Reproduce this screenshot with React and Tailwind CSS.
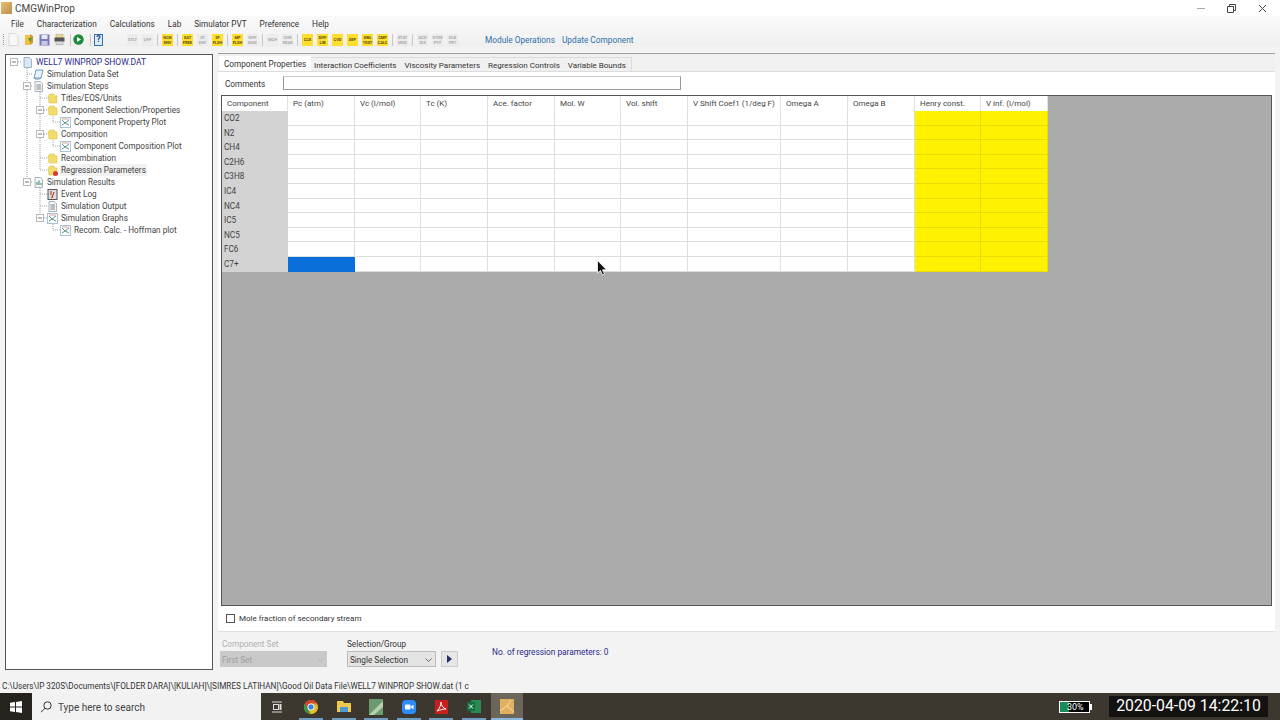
import React from "react";

const menus = ["File", "Characterization", "Calculations", "Lab", "Simulator PVT", "Preference", "Help"];

const tools = [
  ["STLT", "", "g"], ["LHP", "", "g"], "sep", ["NCN", "ENV", "y"], "sep", ["SAT", "FREE", "y"], ["2F", "ENV", "g"], ["2F", "FLSH", "y"], "sep",
  ["MP", "FLSH", "y"], ["KIFF", "MAX", "g"], "sep", ["MCH", "", "g"], ["CHR", "SEAR", "g"], "sep", ["CCE", "", "y"], ["DIFF", "LIB", "y"],
  ["CVD", "", "y"], ["SEP", "", "y"], ["SWL", "TEST", "y"], ["CMP", "CALC", "y"], "sep", ["STAT", "MOD", "g"], "sep", ["GCH", "DIS", "g"], ["STRS", "PVT", "g"], ["DLB", "PRT", "g"],
];

const columns = [
  { name: "Component", w: "w-[66px]" },
  { name: "Pc (atm)", w: "w-[67px]" },
  { name: "Vc (l/mol)", w: "w-[66px]" },
  { name: "Tc (K)", w: "w-[67px]" },
  { name: "Ace. factor", w: "w-[67px]" },
  { name: "Mol. W", w: "w-[66px]" },
  { name: "Vol. shift", w: "w-[67px]" },
  { name: "V Shift Coef1 (1/deg F)", w: "w-[93px]" },
  { name: "Omega A", w: "w-[67px]" },
  { name: "Omega B", w: "w-[67px]" },
  { name: "Henry const.", w: "w-[66px]" },
  { name: "V inf. (l/mol)", w: "w-[67px]" },
];

const comps = ["CO2", "N2", "CH4", "C2H6", "C3H8", "IC4", "NC4", "IC5", "NC5", "FC6", "C7+"];

const treeItems = [
  { level: 0, text: "WELL7 WINPROP SHOW.DAT", icon: "doc", root: true },
  { level: 1, text: "Simulation Data Set", icon: "scroll" },
  { level: 1, text: "Simulation Steps", icon: "list" },
  { level: 2, text: "Titles/EOS/Units", icon: "folder" },
  { level: 2, text: "Component Selection/Properties", icon: "folder" },
  { level: 3, text: "Component Property Plot", icon: "chart" },
  { level: 2, text: "Composition", icon: "folder" },
  { level: 3, text: "Component Composition Plot", icon: "chart" },
  { level: 2, text: "Recombination", icon: "folder" },
  { level: 2, text: "Regression Parameters", icon: "folderx", active: true },
  { level: 1, text: "Simulation Results", icon: "results" },
  { level: 2, text: "Event Log", icon: "log" },
  { level: 2, text: "Simulation Output", icon: "list" },
  { level: 2, text: "Simulation Graphs", icon: "chart" },
  { level: 3, text: "Recom. Calc. - Hoffman plot", icon: "chart" },
];

const levelPad = ["pl-[16px]", "pl-[27px]", "pl-[41px]", "pl-[54px]"];

const TreeIcon = ({ type }) => {
  if (type === "folder" || type === "folderx") {
    return (
      <svg width="11" height="11" viewBox="0 0 11 11" className="shrink-0">
        <path d="M1 3 L3 1 H7 L8 3 H10 V10 H2 Z" fill="#f2dc6a" stroke="#dcc350" strokeWidth="0.6" />
        {type === "folderx" && <circle cx="8.5" cy="8.5" r="2.5" fill="#d83a3a" />}
      </svg>
    );
  }
  if (type === "chart") {
    return (
      <svg width="11" height="11" viewBox="0 0 11 11" className="shrink-0">
        <rect x="0.5" y="0.5" width="10" height="10" fill="#fff" stroke="#a8c6d8" />
        <path d="M2 3 L5 6 L9 8 M2 8 L5 6 L9 3" fill="none" stroke="#3a7a6a" strokeWidth="0.8" />
        <path d="M2 2 H9" stroke="#d06060" strokeWidth="0.6" />
      </svg>
    );
  }
  if (type === "log") {
    return (
      <svg width="11" height="11" viewBox="0 0 11 11" className="shrink-0">
        <rect x="1" y="0.5" width="9" height="10" fill="#ddd" stroke="#555" />
        <path d="M4 2 V6 M7 3 L5 9 M4 8 H4.8" stroke="#b02a2a" strokeWidth="1" />
      </svg>
    );
  }
  if (type === "scroll") {
    return (
      <svg width="11" height="11" viewBox="0 0 11 11" className="shrink-0">
        <path d="M3 1 H10 L8 9 H1 Z" fill="#e8f2f8" stroke="#4a86a8" strokeWidth="0.8" />
        <path d="M1 9 C1 10.5 7 10.5 8 9" fill="none" stroke="#4a86a8" strokeWidth="0.8" />
      </svg>
    );
  }
  return (
    <svg width="11" height="11" viewBox="0 0 11 11" className="shrink-0">
      <path d="M2 0.5 H7.5 L9.5 2.5 V10.5 H2 Z" fill={type === "doc" ? "#d8e6f6" : "#f4f4f4"} stroke="#7f9ab0" strokeWidth="0.7" />
      {type === "list" && <path d="M3.5 4 H8 M3.5 6 H8 M3.5 8 H8" stroke="#555" strokeWidth="0.7" />}
      {type === "results" && <path d="M4 8 V5 M6 8 V3.5 M8 8 V6" stroke="#2f8a6a" strokeWidth="1" />}
    </svg>
  );
};

const TreeLines = () => {
  const y = (i) => 7 + 12 * i;
  const boxes = [
    [8, 0],
    [21, 2],
    [34, 4],
    [34, 6],
    [21, 10],
    [34, 13],
  ];
  return (
    <svg width="100" height="190" className="absolute left-0 top-0">
      <g stroke="#a0a0a0" strokeWidth="1" strokeDasharray="1 1" fill="none">
        <path d={`M8 ${y(0)} H16 M21 ${y(0)} V${y(10)} M21 ${y(1)} H27 M21 ${y(2)} H27 M21 ${y(10)} H27`} />
        <path d={`M34 ${y(2)} V${y(9)} M34 ${y(3)} H41 M34 ${y(4)} H41 M34 ${y(6)} H41 M34 ${y(8)} H41 M34 ${y(9)} H41`} />
        <path d={`M34 ${y(10)} V${y(13)} M34 ${y(11)} H41 M34 ${y(12)} H41 M34 ${y(13)} H41`} />
        <path d={`M47 ${y(4)} V${y(5)} H54 M47 ${y(6)} V${y(7)} H54 M47 ${y(13)} V${y(14)} H54`} />
      </g>
      {boxes.map(([x, i]) => (
        <g key={`${x}-${i}`}>
          <rect x={x - 3.5} y={y(i) - 3.5} width="7" height="7" fill="#fff" stroke="#b8b8b8" />
          <path d={`M${x - 2} ${y(i)} H${x + 2}`} stroke="#777" />
        </g>
      ))}
    </svg>
  );
};

const MiniTool = ({ a, b, kind }) => (
  <div
    className={`flex h-[12px] w-[11px] shrink-0 flex-col items-center justify-center overflow-hidden text-[4px] font-bold leading-[5px] ${
      kind === "y" ? "bg-[#ffdf2e] text-[#5a4a10]" : "bg-[#ececec] text-[#a8a8a8]"
    }`}
  >
    <span>{a}</span>
    {b && <span>{b}</span>}
  </div>
);

const Sep = () => <div className="h-[12px] w-px shrink-0 bg-[#c8c8c8]" />;

const Toolbar = () => (
  <div className="flex h-[15px] items-center pl-[3px]">
    <div className="h-[11px] w-px border-l border-dotted border-[#999]" />
    <svg width="11" height="13" viewBox="0 0 11 13" className="ml-[4px]">
      <path d="M1 0.5 H7 L10 3.5 V12.5 H1 Z" fill="#f7f7f7" stroke="#d8d8d8" />
    </svg>
    <svg width="10" height="13" viewBox="0 0 10 13" className="ml-[5px]">
      <path d="M1 2 H6 V12 H1 Z" fill="#f0c040" />
      <path d="M6 1 L9 3 V10 L6 12 Z" fill="#c89a30" />
      <path d="M4 5 L8 5 L6 9 Z" fill="#4a9a3a" />
    </svg>
    <svg width="11" height="12" viewBox="0 0 11 12" className="ml-[5px]">
      <rect x="0.5" y="0.5" width="10" height="11" fill="#8078c0" />
      <rect x="2.5" y="1" width="6" height="4" fill="#e8e8f4" />
      <rect x="2.5" y="7" width="6" height="4" fill="#c8c8e0" />
    </svg>
    <svg width="11" height="11" viewBox="0 0 11 11" className="ml-[4px]">
      <rect x="2" y="0.5" width="7" height="3" fill="#e8d890" stroke="#b0a060" strokeWidth="0.5" />
      <rect x="0.5" y="3.5" width="10" height="4" fill="#555" />
      <rect x="2" y="7.5" width="7" height="3" fill="#ddd" stroke="#888" strokeWidth="0.5" />
    </svg>
    <div className="ml-[5px] h-[12px] w-px bg-[#c8c8c8]" />
    <svg width="11" height="11" viewBox="0 0 11 11" className="ml-[2px]">
      <circle cx="5.5" cy="5.5" r="5.2" fill="#1f8a3a" />
      <path d="M4 3 L8 5.5 L4 8 Z" fill="#fff" />
    </svg>
    <div className="ml-[6px] h-[12px] w-px bg-[#c8c8c8]" />
    <div className="ml-[3px] flex h-[12px] w-[9px] items-center justify-center border border-[#3a6ea8] bg-[#dceaf8] text-[9px] font-bold leading-none text-[#1f4f9a]">
      ?
    </div>
    <div className="ml-[24px] flex items-center gap-[4px]">
      {tools.map((t, i) =>
        t === "sep" ? <Sep key={i} /> : <MiniTool key={i} a={t[0]} b={t[1]} kind={t[2]} />
      )}
    </div>
    <span className="ml-[27px] pt-[2px] text-[8.3px] text-[#2f6fa8]">Module Operations</span>
    <span className="ml-[7px] pt-[2px] text-[8.3px] text-[#2f6fa8]">Update Component</span>
  </div>
);

const Grid = () => (
  <div className="mx-[3px] mt-[5px] h-[511px] border border-[#555] bg-[#ababab]">
    <div className="flex h-[15px] w-[826px] bg-white">
      {columns.map((c) => (
        <div key={c.name} className={`${c.w} whitespace-nowrap border-r border-[#e0e0e0] pl-[5px] text-[8px] leading-[16px] text-[#444]`}>
          {c.name}
        </div>
      ))}
    </div>
    {comps.map((comp, r) => (
      <div key={comp} className="flex h-[14.6px] w-[826px]">
        {columns.map((c, i) => {
          let bg = "bg-white border-[#dedede]";
          if (i === 0) bg = "bg-[#d3d3d3] border-[#d3d3d3]";
          if (i >= 10) bg = "bg-[#fff200] border-[#e8dc00]";
          if (i === 1 && r === 10) bg = "bg-[#0a6fd8] border-[#0a6fd8]";
          return (
            <div key={c.name} className={`${c.w} ${bg} border-b border-r pl-[2px] text-[8.2px] leading-[14px] text-[#444]`}>
              {i === 0 ? comp : ""}
            </div>
          );
        })}
      </div>
    ))}
  </div>
);

const Chevron = ({ color }) => (
  <svg width="7" height="5" viewBox="0 0 7 5">
    <path d="M0.5 0.5 L3.5 3.5 L6.5 0.5" fill="none" stroke={color} />
  </svg>
);

const TaskIcon = ({ children, active }) => (
  <div className={`relative flex h-[27px] w-[32.6px] items-center justify-center ${active ? "bg-[#6b655a]" : ""}`}>
    {children}
    <div className={`absolute bottom-0 h-[2px] ${active ? "left-0 w-[32px] bg-[#8ab8dc]" : "left-[4px] w-[24px] bg-[#6f9cc0]"}`} />
  </div>
);

const Taskbar = () => (
  <div className="flex h-[27px] items-center bg-[#3c372f]">
    <div className="flex h-[27px] w-[32px] items-center justify-center bg-[#26231e]">
      <svg width="12" height="12" viewBox="0 0 12 12">
        <path d="M0 1.8 L5 1 V5.6 H0 Z M6 0.9 L12 0 V5.6 H6 Z M0 6.4 H5 V11 L0 10.2 Z M6 6.4 H12 V12 L6 11.1 Z" fill="#fff" />
      </svg>
    </div>
    <div className="flex h-[27px] w-[229px] items-center bg-[#f2f2f2] pl-[8px]">
      <svg width="12" height="12" viewBox="0 0 12 12">
        <circle cx="7.5" cy="4.5" r="3.7" fill="none" stroke="#333" />
        <path d="M5 7.2 L1 11.2" stroke="#333" />
      </svg>
      <span className="ml-[6px] pt-[2px] text-[10px] text-[#444]">Type here to search</span>
    </div>
    <div className="flex w-[32px] justify-center">
      <svg width="12" height="12" viewBox="0 0 12 12">
        <path d="M1 1 H11 M1 11 H11" stroke="#ddd" />
        <rect x="2.5" y="3.5" width="5" height="5" fill="none" stroke="#ddd" />
        <path d="M9.5 3 V9" stroke="#ddd" strokeWidth="2" />
      </svg>
    </div>
    <div className="ml-[2px] flex">
      <TaskIcon>
        <svg width="14" height="14" viewBox="0 0 14 14">
          <circle cx="7" cy="7" r="7" fill="#e0b020" />
          <path d="M7 0 A7 7 0 0 1 13 3.5 L7 3.5 L3 9 L1 3.5 A7 7 0 0 1 7 0" fill="#d8402c" />
          <path d="M13.4 5 A7 7 0 0 1 6 14 L9 9 Z" fill="#e8c020" />
          <path d="M1 3.5 L4 9.5 L6.5 14 A7 7 0 0 1 1 3.5" fill="#2f9a4a" />
          <circle cx="7" cy="7" r="3.2" fill="#3a80e0" stroke="#fff" />
        </svg>
      </TaskIcon>
      <TaskIcon>
        <svg width="14" height="13" viewBox="0 0 14 13">
          <path d="M0 1 H6 L7 3 H14 V12 H0 Z" fill="#f2c84a" />
          <rect x="3" y="7" width="8" height="5" fill="#4a9ad8" />
        </svg>
      </TaskIcon>
      <TaskIcon>
        <svg width="14" height="16" viewBox="0 0 14 16">
          <rect width="14" height="16" fill="#6a9a70" />
          <path d="M0 16 L14 2 V8 L5 16 Z" fill="#b8d0a8" />
        </svg>
      </TaskIcon>
      <TaskIcon>
        <svg width="14" height="14" viewBox="0 0 14 14">
          <rect width="14" height="14" rx="4" fill="#2d8cff" />
          <rect x="3" y="4.5" width="5.5" height="5" rx="1" fill="#fff" />
          <path d="M9 6.5 L11.5 4.8 V9.2 L9 7.5 Z" fill="#fff" />
        </svg>
      </TaskIcon>
      <TaskIcon>
        <svg width="13" height="14" viewBox="0 0 13 14">
          <rect width="13" height="14" fill="#c81e1e" />
          <path d="M2 11 C5 8 6 5 6 2 C6.5 6 8 8 11 9 C8 9 5 10 2 11" fill="none" stroke="#fff" />
        </svg>
      </TaskIcon>
      <TaskIcon>
        <svg width="14" height="13" viewBox="0 0 14 13">
          <rect x="4" width="10" height="13" fill="#2a8a50" />
          <rect y="2" width="8" height="9" fill="#107040" />
          <path d="M2 4.5 L6 8.5 M6 4.5 L2 8.5" stroke="#fff" />
        </svg>
      </TaskIcon>
      <TaskIcon active>
        <svg width="14" height="15" viewBox="0 0 14 15">
          <rect width="14" height="15" fill="#e0b060" />
          <path d="M0 12 L7 7 L14 13 M7 7 L11 1" stroke="#f4dcae" fill="none" />
        </svg>
      </TaskIcon>
    </div>
    <div className="ml-auto flex items-center">
      <div className="flex h-[12px] w-[31px] border border-white bg-black">
        <div className="w-[9px] bg-[#1a8a5a]" />
        <span className="ml-[-2px] text-[9px] leading-[10px] text-white">30%</span>
      </div>
      <div className="h-[6px] w-[2px] bg-white" />
      <div className="ml-[17px] mr-[12px] flex h-[21px] w-[159px] items-start justify-center bg-[#141210]">
        <span className="whitespace-nowrap text-[15.8px] leading-[20px] text-white">2020-04-09 14:22:10</span>
      </div>
    </div>
  </div>
);

export default function App() {
  return (
    <div className="relative flex h-[720px] w-[1280px] flex-col overflow-hidden bg-[#f3f3f3] font-['Roboto','Liberation_Sans',sans-serif] text-[8.2px] text-[#333]">
      {/* title bar */}
      <div className="flex h-[16px] items-center bg-white">
        <div className="ml-[1px] h-[12px] w-[11px] bg-gradient-to-br from-[#e8c070] to-[#b89050]" />
        <span className="ml-[3px] text-[10px] text-[#444]">CMGWinProp</span>
        <div className="ml-auto flex items-center gap-[22px] pr-[13px]">
          <div className="h-px w-[8px] bg-[#aaa]" />
          <svg width="9" height="9" viewBox="0 0 9 9">
            <path d="M0.5 2.5 H6.5 V8.5 H0.5 Z M2.5 2.5 V0.5 H8.5 V6.5 H6.5" fill="none" stroke="#444" />
          </svg>
          <svg width="9" height="9" viewBox="0 0 9 9">
            <path d="M1 1 L8 8 M8 1 L1 8" stroke="#444" />
          </svg>
        </div>
      </div>

      <div className="bg-gradient-to-b from-[#fafafa] to-[#efefef]">
        {/* menu */}
        <div className="flex h-[16px] items-center gap-[13px] pl-[11px] pt-[1px]">
          {menus.map((m) => (
            <span key={m} className="text-[8.2px] text-[#333]">
              {m}
            </span>
          ))}
        </div>
        <Toolbar />
      </div>

      {/* body */}
      <div className="flex h-[633px]">
        <div className="w-[218px] pb-[10px] pl-[5px] pr-[5px] pt-[7px]">
          <div className="relative h-[616px] w-[208px] border border-[#555] bg-white">
            <TreeLines />
            <div className="relative pt-px">
              {treeItems.map((item) => (
                <div key={item.text} className={`flex h-[12px] items-center ${levelPad[item.level]}`}>
                  <TreeIcon type={item.icon} />
                  <span
                    className={`ml-[2px] whitespace-nowrap px-[1px] leading-[12px] ${
                      item.root ? "text-[8.5px] text-[#2a2a8a]" : "text-[8.2px] text-[#444]"
                    } ${item.active ? "bg-[#f1f1f1]" : ""}`}
                  >
                    {item.text}
                  </span>
                </div>
              ))}
            </div>
          </div>
        </div>

        <div className="mt-[6px] flex w-[1057px] flex-col border-t border-[#a0a0a0]">
          {/* tabs */}
          <div className="flex h-[18px] items-end border-b border-[#dcdcdc] bg-[#f0f0f0] pl-[1px]">
            <div className="flex h-[15px] w-[92px] items-center whitespace-nowrap bg-white pl-[5px] pt-[2px] text-[8.2px] text-[#333]">Component Properties</div>
            <div className="flex h-[14px] w-[321px] items-center gap-[8px] whitespace-nowrap border-r border-t border-[#dcdcdc] pl-[3px] pt-[3px] text-[8px] text-[#333]">
              <span>Interaction Coefficients</span>
              <span>Viscosity Parameters</span>
              <span>Regression Controls</span>
              <span>Variable Bounds</span>
            </div>
          </div>

          <div className="bg-white pt-[4px]">
            <div className="flex h-[14px] items-center pl-[7px]">
              <span className="w-[58px] pt-[2px] text-[8.2px] text-[#333]">Comments</span>
              <div className="h-[14px] w-[398px] border border-[#999] border-t-[#ccc] bg-white" />
            </div>
            <Grid />
            <div className="flex h-[26px] items-center border-b border-[#e0e0e0] pl-[8px]">
              <div className="h-[9px] w-[9px] border border-[#555] bg-white" />
              <span className="ml-[4px] pt-[1px] text-[8px] text-[#333]">Mole fraction of secondary stream</span>
            </div>
          </div>

          {/* footer */}
          <div className="flex flex-1 items-start bg-[#f3f3f3] pl-[2px] pt-[6px]">
            <div className="w-[107px]">
              <div className="pl-[2px] text-[8.2px] leading-[12px] text-[#b0b0b0]">Component Set</div>
              <div className="mt-[1px] flex h-[16px] items-center justify-between bg-[#c9c9c9] pl-[2px] pr-[3px] pt-[2px] text-[#a0a0a0]">
                <span>First Set</span>
                <Chevron color="#b0b0b0" />
              </div>
            </div>
            <div className="ml-[20px] w-[89px]">
              <div className="text-[8.2px] leading-[12px] text-[#333]">Selection/Group</div>
              <div className="mt-[1px] flex h-[16px] items-center justify-between border border-[#bbb] bg-[#e4e4e4] pl-[2px] pr-[3px] pt-[2px] text-[#333]">
                <span>Single Selection</span>
                <Chevron color="#666" />
              </div>
            </div>
            <div className="ml-[5px] mt-[13px] flex h-[16px] w-[17px] items-center justify-center border border-[#ccc] bg-[#e6e6e6]">
              <svg width="5" height="8" viewBox="0 0 5 8">
                <path d="M0 0 L5 4 L0 8 Z" fill="#1f2f6a" />
              </svg>
            </div>
            <span className="ml-[34px] mt-[6px] text-[8.3px] leading-[16px] text-[#2a2a8a]">No. of regression parameters: 0</span>
          </div>
        </div>
      </div>

      {/* status bar */}
      <div className="h-[13px] whitespace-nowrap pl-[2px] text-[8.2px] leading-[13px] text-[#333]">
        {"C:\\Users\\IP 320S\\Documents\\[FOLDER DARA]\\[KULIAH]\\[SIMRES LATIHAN]\\Good Oil Data File\\WELL7 WINPROP SHOW.dat (1 c"}
      </div>

      <Taskbar />

      {/* mouse pointer */}
      <svg width="12" height="16" viewBox="0 0 12 16" className="absolute left-[597px] top-[260px]">
        <path d="M0.5 0.5 V13 L3.5 10.5 L5.5 15 L7.5 14 L5.5 9.8 H9.5 Z" fill="#111" stroke="#fff" strokeWidth="0.8" />
      </svg>
    </div>
  );
}
